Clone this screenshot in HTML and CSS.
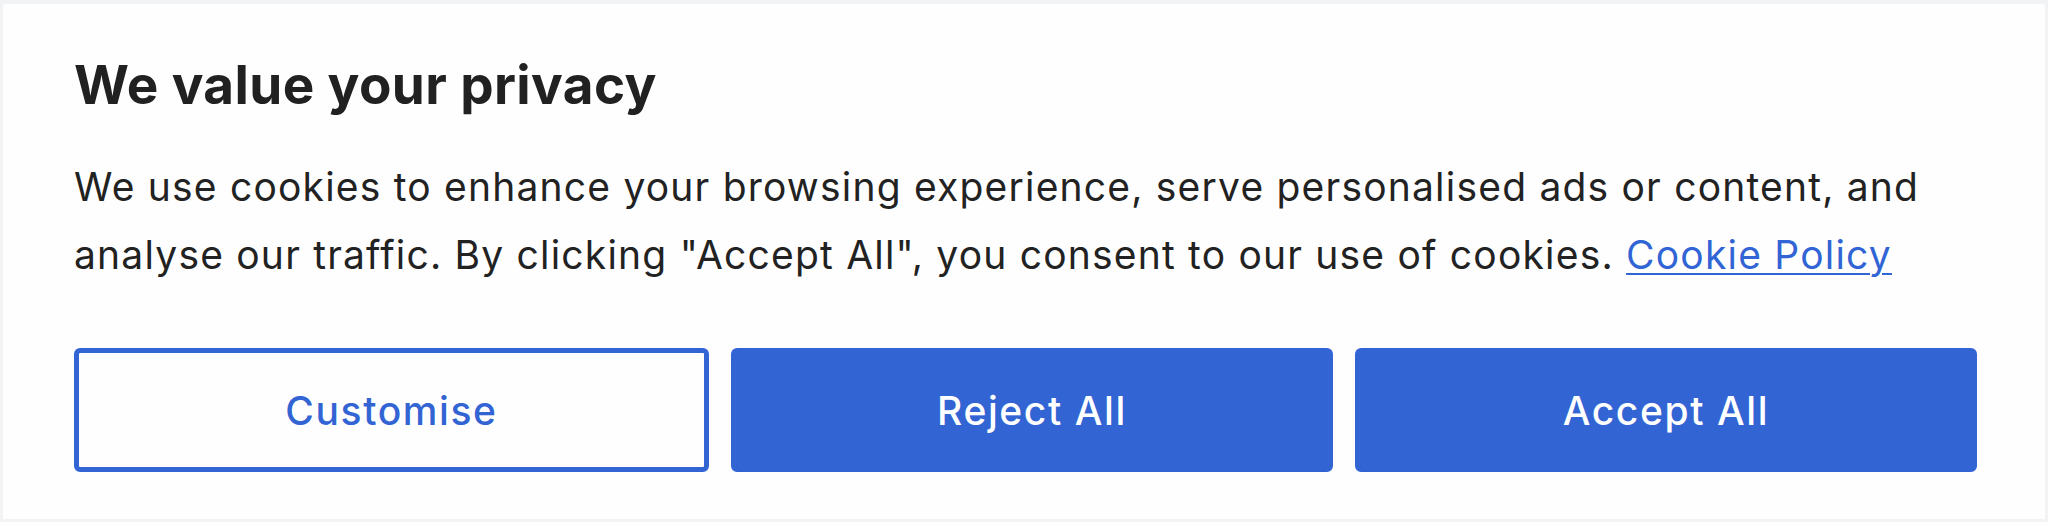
FILE: index.html
```html
<!DOCTYPE html>
<html lang="en">
<head>
<meta charset="utf-8">
<title>Cookie consent</title>
<link rel="stylesheet" href="styles.css">
</head>
<body>
  <section class="consent">
    <h2 class="consent-title">We value your privacy</h2>
    <p class="consent-text">We use cookies to enhance your browsing experience, serve personalised ads or content, and analyse our traffic. By clicking "Accept All", you consent to our use of cookies. <a class="consent-link" href="#">Cookie Policy</a></p>
    <div class="consent-actions">
      <button class="btn btn-outline" type="button">Customise</button>
      <button class="btn btn-solid" type="button">Reject All</button>
      <button class="btn btn-solid" type="button">Accept All</button>
    </div>
  </section>
</body>
</html>
```
FILE: styles.css
```css
html, body {
  margin: 0;
  padding: 0;
}

body {
  background: #f2f3f4;
  padding: 4px 3px 3px 3px;
  font-family: "Inter", "Noto Sans", sans-serif;
  color: #222222;
}

.consent {
  background: #fefefe;
  height: 515px;
  box-sizing: border-box;
  padding: 51px 68px 47px 71px;
  display: flex;
  flex-direction: column;
}

.consent-title {
  margin: 0;
  font-size: 53px;
  line-height: 60px;
  font-weight: 700;
  letter-spacing: 0.4px;
  color: #212121;
}

.consent-text {
  margin: 38px 0 0 0;
  font-size: 39px;
  line-height: 68px;
  font-weight: 400;
  letter-spacing: 1.2px;
  color: #222222;
}

.consent-link {
  color: #3164d4;
  text-decoration: underline;
  text-decoration-thickness: 2px;
  text-underline-offset: 4px;
}

.consent-actions {
  margin-top: auto;
  display: grid;
  grid-template-columns: 636fr 603fr 623fr;
  gap: 22px;
  height: 124px;
}

.btn {
  box-sizing: border-box;
  border: 5px solid #3264d4;
  border-radius: 6px;
  font-family: "Inter", "Noto Sans", sans-serif;
  font-size: 39px;
  font-weight: 500;
  letter-spacing: 1.6px;
  display: flex;
  align-items: center;
  justify-content: center;
  padding: 0;
  cursor: pointer;
}

.btn-outline {
  background: #fefefe;
  color: #3264d4;
}

.btn-solid {
  background: #3264d4;
  color: #ffffff;
}
```
